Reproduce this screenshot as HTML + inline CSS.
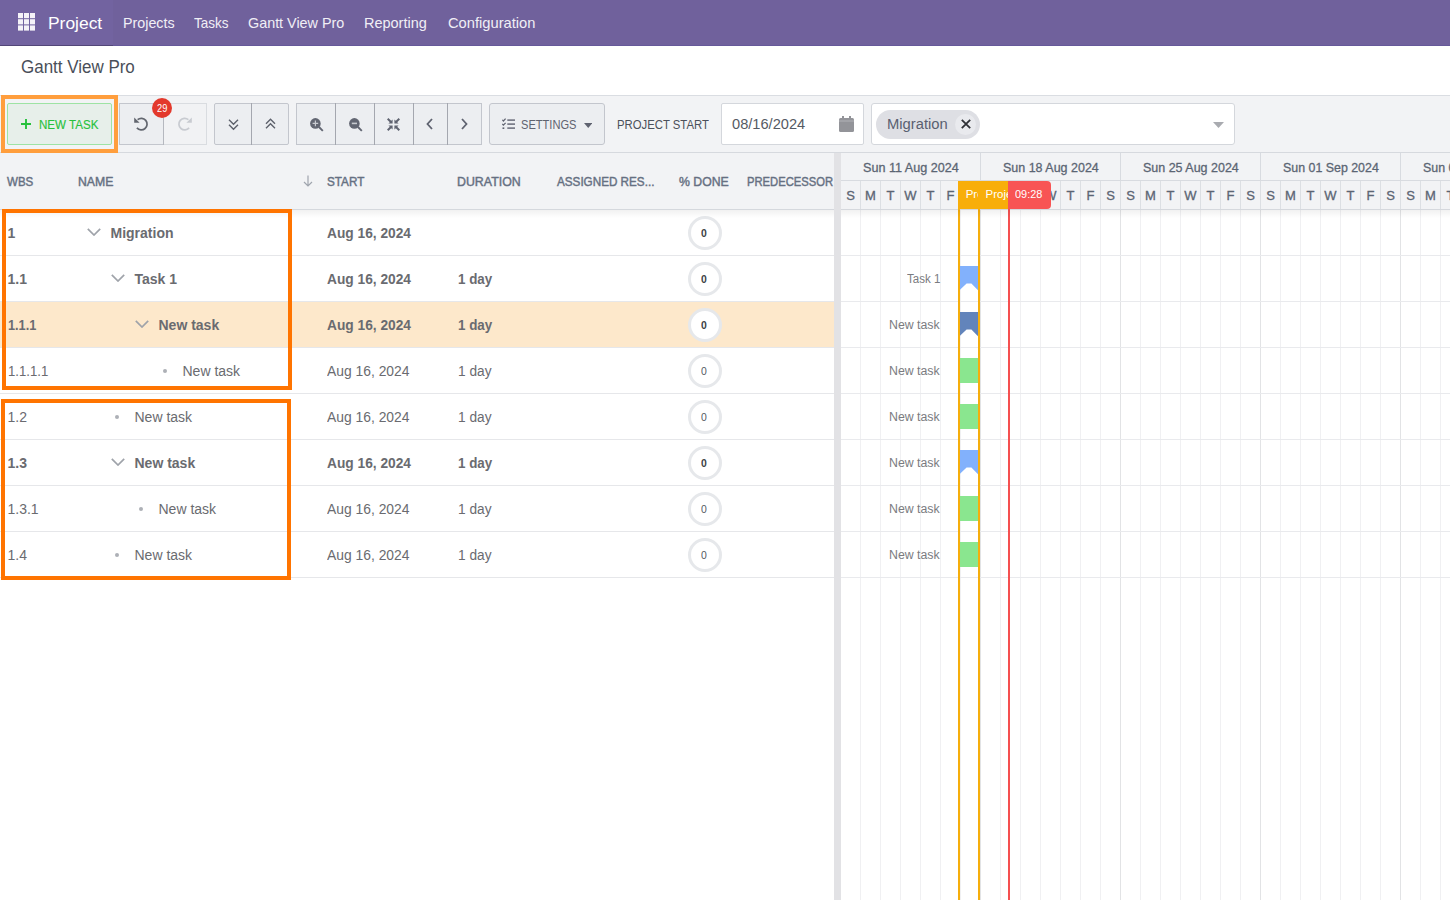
<!DOCTYPE html>
<html><head><meta charset="utf-8"><title>Gantt View Pro</title>
<style>
*{box-sizing:border-box;margin:0;padding:0}
html,body{width:1450px;height:900px;overflow:hidden;background:#fff;font-family:"Liberation Sans", sans-serif;}
.abs{position:absolute;white-space:nowrap}
.btn{position:absolute;top:103px;height:42px;background:#eceef1;border:1px solid #c3c6cd;}
.sep{position:absolute;top:103px;width:1px;height:42px;background:#a4a7af}
.row{position:absolute;left:0;width:835px;height:46px;border-bottom:1px solid #e6e7ea}
.pct{position:absolute;left:688px;width:34px;height:34px;border:3px solid #e6e8eb;border-radius:50%;background:#fff}
.wk{position:absolute;top:0;height:28px;border-right:1px solid #d8dbe0;border-bottom:1px solid #d8dbe0}
.dy{position:absolute;top:28px;height:28px;width:20px;border-right:1px solid #dcdfe3}
.gl{position:absolute;top:210px;width:1px;height:690px;background:#eeeff1}
.glr{position:absolute;left:841px;width:609px;height:1px;background:#e9eaed}
.obox{position:absolute;border:4px solid #ff7400}
</style></head><body>

<div class="abs" style="left:0;top:0;width:1450px;height:46px;background:#70619c;border-bottom:1px solid #66599a"></div>
<div class="abs" style="left:0;top:0;width:113px;height:45px;background:#7263a0"></div>
<div class="abs" style="left:0;top:45px;width:113px;height:1px;background:#524678"></div>
<svg class="abs" style="left:18px;top:13px" width="17" height="18" viewBox="0 0 17 18">
<rect x="0" y="0.0" width="5" height="5.2" fill="#f5f3f8"/>
<rect x="0" y="6.2" width="5" height="5.2" fill="#f5f3f8"/>
<rect x="0" y="12.4" width="5" height="5.2" fill="#f5f3f8"/>
<rect x="6" y="0.0" width="5" height="5.2" fill="#f5f3f8"/>
<rect x="6" y="6.2" width="5" height="5.2" fill="#f5f3f8"/>
<rect x="6" y="12.4" width="5" height="5.2" fill="#f5f3f8"/>
<rect x="12" y="0.0" width="5" height="5.2" fill="#f5f3f8"/>
<rect x="12" y="6.2" width="5" height="5.2" fill="#f5f3f8"/>
<rect x="12" y="12.4" width="5" height="5.2" fill="#f5f3f8"/>
</svg>
<div class="abs" style="left:47.8px;top:15px;font-size:17.4px;line-height:17.4px;font-weight:400;color:#ffffff;transform:scaleX(1.0014);transform-origin:0 0;">Project</div>
<div class="abs" style="left:122.7px;top:16px;font-size:14.5px;line-height:14.5px;font-weight:400;color:#f1eff6;transform:scaleX(0.9849);transform-origin:0 0;">Projects</div>
<div class="abs" style="left:193.9px;top:16px;font-size:14.5px;line-height:14.5px;font-weight:400;color:#f1eff6;transform:scaleX(0.9305);transform-origin:0 0;">Tasks</div>
<div class="abs" style="left:248px;top:16px;font-size:14.5px;line-height:14.5px;font-weight:400;color:#f1eff6;transform:scaleX(0.9901);transform-origin:0 0;">Gantt View Pro</div>
<div class="abs" style="left:364.3px;top:16px;font-size:14.5px;line-height:14.5px;font-weight:400;color:#f1eff6;transform:scaleX(0.9988);transform-origin:0 0;">Reporting</div>
<div class="abs" style="left:447.5px;top:16px;font-size:14.5px;line-height:14.5px;font-weight:400;color:#f1eff6;transform:scaleX(1.0133);transform-origin:0 0;">Configuration</div>
<div class="abs" style="left:20.7px;top:59px;font-size:17.5px;line-height:17.5px;font-weight:400;color:#4a4f59;transform:scaleX(0.9695);transform-origin:0 0;">Gantt View Pro</div>
<div class="abs" style="left:0;top:95px;width:1450px;height:58px;background:#f2f3f5;border-top:1px solid #dadde2;border-bottom:1px solid #d6d9de"></div>
<div class="abs" style="left:1px;top:95px;width:117px;height:58px;border:4px solid #ff9e3d"></div>
<div class="abs" style="left:7px;top:103px;width:105px;height:42px;background:#e7efea;border:1px solid #9ee3a4;border-radius:2px"></div>
<svg class="abs" style="left:21px;top:119px" width="10" height="10" viewBox="0 0 10 10"><path d="M5 0 V10 M0 5 H10" stroke="#27c13d" stroke-width="1.9"/></svg>
<div class="abs" style="left:38.5px;top:118px;font-size:13px;line-height:13px;font-weight:400;color:#27c13d;transform:scaleX(0.8920);transform-origin:0 0;-webkit-text-stroke:0.15px #27c13d;">NEW TASK</div>
<div class="btn" style="left:119px;width:45px"></div>
<div class="btn" style="left:163px;width:44px;background:#f1f2f4;border-color:#d9dce0"></div>
<div class="sep" style="left:163px;background:#b5b8bf"></div>
<svg class="abs" style="left:133px;top:116px" width="16" height="16" viewBox="0 0 16 16"><path d="M4.6 3.6 A5.8 5.8 0 1 1 3.9 11.9" fill="none" stroke="#62666f" stroke-width="1.7"/><path d="M1.2 1.4 L1.2 6.8 L6.6 6.8 Z" fill="#62666f"/></svg>
<svg class="abs" style="left:177px;top:116px" width="16" height="16" viewBox="0 0 16 16"><g transform="translate(16 0) scale(-1 1)"><path d="M4.6 3.6 A5.8 5.8 0 1 1 3.9 11.9" fill="none" stroke="#c8cbd1" stroke-width="1.7"/><path d="M1.2 1.4 L1.2 6.8 L6.6 6.8 Z" fill="#c8cbd1"/></g></svg>
<div class="abs" style="left:152px;top:98px;width:20px;height:20px;border-radius:50%;background:#e3392c"></div>
<div class="abs" style="left:156.7px;top:104px;font-size:10.2px;line-height:10.2px;font-weight:400;color:#ffffff;transform:scaleX(0.9080);transform-origin:0 0;">29</div>
<div class="btn" style="left:214px;width:38px;border-radius:2px 0 0 2px"></div>
<div class="btn" style="left:251px;width:38px;border-radius:0 2px 2px 0"></div>
<div class="sep" style="left:251px"></div>
<svg class="abs" style="left:228px;top:118px" width="11" height="14" viewBox="0 0 11 14"><path d="M1 1.8 L5.5 6.3 L10 1.8 M1 6.8 L5.5 11.3 L10 6.8" fill="none" stroke="#5c606b" stroke-width="1.35"/></svg>
<svg class="abs" style="left:264.5px;top:117px" width="11" height="14" viewBox="0 0 11 14"><path d="M1 6.8 L5.5 2.3 L10 6.8 M1 11.3 L5.5 6.8 L10 11.3" fill="none" stroke="#5c606b" stroke-width="1.35"/></svg>
<div class="btn" style="left:296px;width:40px"></div>
<div class="btn" style="left:335px;width:40px"></div>
<div class="btn" style="left:374px;width:40px"></div>
<div class="btn" style="left:413px;width:35px"></div>
<div class="btn" style="left:447px;width:35px"></div>
<div class="sep" style="left:335px"></div>
<div class="sep" style="left:374px"></div>
<div class="sep" style="left:413px"></div>
<div class="sep" style="left:447px"></div>
<svg class="abs" style="left:309.5px;top:117.5px" width="14" height="14" viewBox="0 0 14 14"><circle cx="5.4" cy="5.4" r="5.3" fill="#626672"/><path d="M9 9 L12.8 12.8" stroke="#626672" stroke-width="1.9"/><path d="M5.4 2.6 V8.2 M2.6 5.4 H8.2" stroke="#c8cad0" stroke-width="1.2"/></svg>
<svg class="abs" style="left:348.5px;top:117.5px" width="14" height="14" viewBox="0 0 14 14"><circle cx="5.4" cy="5.4" r="5.3" fill="#626672"/><path d="M9 9 L12.8 12.8" stroke="#626672" stroke-width="1.9"/><path d="M2.8 5.4 H8" stroke="#c8cad0" stroke-width="1.6"/></svg>
<svg class="abs" style="left:387px;top:118px" width="13" height="13" viewBox="0 0 13 13"><g fill="#5f6370"><path d="M5.6 5.6 V1.4 L4.2 2.8 L1.4 0 L0 1.4 L2.8 4.2 L1.4 5.6 Z"/><path transform="translate(13 0) scale(-1 1)" d="M5.6 5.6 V1.4 L4.2 2.8 L1.4 0 L0 1.4 L2.8 4.2 L1.4 5.6 Z"/><path transform="translate(0 13) scale(1 -1)" d="M5.6 5.6 V1.4 L4.2 2.8 L1.4 0 L0 1.4 L2.8 4.2 L1.4 5.6 Z"/><path transform="translate(13 13) scale(-1 -1)" d="M5.6 5.6 V1.4 L4.2 2.8 L1.4 0 L0 1.4 L2.8 4.2 L1.4 5.6 Z"/></g></svg>
<svg class="abs" style="left:425px;top:117px" width="10" height="14" viewBox="0 0 10 14"><path d="M7 2 L2.5 7 L7 12" fill="none" stroke="#5f6370" stroke-width="1.8"/></svg>
<svg class="abs" style="left:459px;top:117px" width="10" height="14" viewBox="0 0 10 14"><path d="M3 2 L7.5 7 L3 12" fill="none" stroke="#5f6370" stroke-width="1.8"/></svg>
<div class="btn" style="left:489px;width:116px;border-radius:3px"></div>
<svg class="abs" style="left:502px;top:118px" width="14" height="12" viewBox="0 0 14 12"><g fill="#5f6370"><rect x="5.3" y="1.4" width="7.7" height="1.4"/><rect x="5.3" y="5.4" width="7.7" height="1.4"/><rect x="5.3" y="9.4" width="7.7" height="1.4"/><path d="M0.3 1.8 L1.4 3 L3.6 0.6" fill="none" stroke="#5f6370" stroke-width="1.2"/><path d="M0.3 6 L1.4 7.2 L3.6 4.8" fill="none" stroke="#5f6370" stroke-width="1.2"/><rect x="0.5" y="9.4" width="1.8" height="1.6"/></g></svg>
<div class="abs" style="left:521.4px;top:118px;font-size:13.2px;line-height:13.2px;font-weight:400;color:#5f6370;transform:scaleX(0.8415);transform-origin:0 0;">SETTINGS</div>
<svg class="abs" style="left:583.5px;top:123px" width="8.5" height="5" viewBox="0 0 8.5 5"><path d="M0 0 H8.5 L4.25 5 Z" fill="#5f6370"/></svg>
<div class="abs" style="left:616.6px;top:118px;font-size:13.2px;line-height:13.2px;font-weight:400;color:#4b505a;transform:scaleX(0.8590);transform-origin:0 0;">PROJECT START</div>
<div class="abs" style="left:721px;top:103px;width:143px;height:42px;background:#fff;border:1px solid #d4d7dc;border-radius:2px"></div>
<div class="abs" style="left:732.4px;top:116px;font-size:15px;line-height:15px;font-weight:400;color:#555a63;transform:scaleX(0.9750);transform-origin:0 0;">08/16/2024</div>
<svg class="abs" style="left:839px;top:116px" width="15" height="16" viewBox="0 0 15 16"><g fill="#939499"><rect x="0" y="2" width="15" height="14" rx="1.5"/><rect x="3" y="0" width="2" height="4"/><rect x="10" y="0" width="2" height="4"/></g><rect x="0" y="4.6" width="15" height="0.8" fill="#b9babe"/></svg>
<div class="abs" style="left:871px;top:103px;width:364px;height:42px;background:#fff;border:1px solid #d4d7dc;border-radius:3px"></div>
<div class="abs" style="left:876px;top:110px;width:104px;height:29px;background:#dedfe4;border-radius:15px"></div>
<div class="abs" style="left:886.8px;top:117px;font-size:14px;line-height:14px;font-weight:400;color:#596070;transform:scaleX(1.0539);transform-origin:0 0;">Migration</div>
<div class="abs" style="left:955px;top:114px;width:21px;height:21px;border-radius:50%;background:#e9eaee"></div>
<svg class="abs" style="left:960.5px;top:118.5px" width="10" height="10" viewBox="0 0 10 10"><path d="M0.8 0.8 L9.2 9.2 M9.2 0.8 L0.8 9.2" stroke="#2f3136" stroke-width="1.8"/></svg>
<svg class="abs" style="left:1213px;top:122px" width="11" height="6" viewBox="0 0 11 6"><path d="M0 0 H11 L5.5 6 Z" fill="#a9abb0"/></svg>
<div class="abs" style="left:0;top:153px;width:835px;height:57px;background:#f2f3f5;border-bottom:1px solid #d5d8dd"></div>
<div class="abs" style="left:7.3px;top:175px;font-size:13px;line-height:13px;font-weight:400;color:#667082;transform:scaleX(0.8878);transform-origin:0 0;-webkit-text-stroke:0.45px #667082;">WBS</div>
<div class="abs" style="left:77.6px;top:175px;font-size:13px;line-height:13px;font-weight:400;color:#667082;transform:scaleX(0.9424);transform-origin:0 0;-webkit-text-stroke:0.45px #667082;">NAME</div>
<div class="abs" style="left:327.2px;top:175px;font-size:13px;line-height:13px;font-weight:400;color:#667082;transform:scaleX(0.9005);transform-origin:0 0;-webkit-text-stroke:0.45px #667082;">START</div>
<div class="abs" style="left:457.1px;top:175px;font-size:13px;line-height:13px;font-weight:400;color:#667082;transform:scaleX(0.9516);transform-origin:0 0;-webkit-text-stroke:0.45px #667082;">DURATION</div>
<div class="abs" style="left:557.2px;top:175px;font-size:13px;line-height:13px;font-weight:400;color:#667082;transform:scaleX(0.8987);transform-origin:0 0;-webkit-text-stroke:0.45px #667082;">ASSIGNED RES...</div>
<div class="abs" style="left:679.4px;top:175px;font-size:13px;line-height:13px;font-weight:400;color:#667082;transform:scaleX(0.9425);transform-origin:0 0;-webkit-text-stroke:0.45px #667082;">% DONE</div>
<div class="abs" style="left:747px;top:175px;font-size:13px;line-height:13px;font-weight:400;color:#667082;transform:scaleX(0.8636);transform-origin:0 0;-webkit-text-stroke:0.45px #667082;">PREDECESSOR</div>
<svg class="abs" style="left:303px;top:175px" width="10" height="12" viewBox="0 0 10 12"><path d="M5 0.5 V11 M1 7 L5 11 L9 7" fill="none" stroke="#a0a5ae" stroke-width="1.2"/></svg>
<div class="row" style="top:210px;background:#fff"></div>
<div class="abs" style="left:7.5px;top:226px;font-size:14px;line-height:14px;font-weight:700;color:#6a6b70;">1</div>
<svg class="abs" style="left:86.5px;top:228px" width="14" height="8" viewBox="0 0 14 8"><path d="M0.8 0.8 L7 7 L13.2 0.8" fill="none" stroke="#9fa3aa" stroke-width="1.7"/></svg>
<div class="abs" style="left:110.5px;top:226px;font-size:14px;line-height:14px;font-weight:700;color:#6a6b70;">Migration</div>
<div class="abs" style="left:327.2px;top:226px;font-size:14px;line-height:14px;font-weight:700;color:#6a6b70;transform:scaleX(0.9812);transform-origin:0 0;">Aug 16, 2024</div>
<div class="pct" style="top:216px"></div>
<div class="abs" style="left:701.4px;top:228px;font-size:11px;line-height:11px;font-weight:700;color:#3c3f46;transform:scaleX(0.9469);transform-origin:0 0;">0</div>
<div class="row" style="top:256px;background:#fff"></div>
<div class="abs" style="left:7.5px;top:272px;font-size:14px;line-height:14px;font-weight:700;color:#6a6b70;">1.1</div>
<svg class="abs" style="left:110.5px;top:274px" width="14" height="8" viewBox="0 0 14 8"><path d="M0.8 0.8 L7 7 L13.2 0.8" fill="none" stroke="#9fa3aa" stroke-width="1.7"/></svg>
<div class="abs" style="left:134.5px;top:272px;font-size:14px;line-height:14px;font-weight:700;color:#6a6b70;">Task 1</div>
<div class="abs" style="left:327.2px;top:272px;font-size:14px;line-height:14px;font-weight:700;color:#6a6b70;transform:scaleX(0.9812);transform-origin:0 0;">Aug 16, 2024</div>
<div class="abs" style="left:457.6px;top:272px;font-size:14px;line-height:14px;font-weight:700;color:#6a6b70;transform:scaleX(0.9550);transform-origin:0 0;">1 day</div>
<div class="pct" style="top:262px"></div>
<div class="abs" style="left:701.4px;top:274px;font-size:11px;line-height:11px;font-weight:700;color:#3c3f46;transform:scaleX(0.9469);transform-origin:0 0;">0</div>
<div class="row" style="top:302px;background:#fde8cb"></div>
<div class="abs" style="left:7.5px;top:318px;font-size:14px;line-height:14px;font-weight:700;color:#6a6b70;transform:scaleX(0.9088);transform-origin:0 0;">1.1.1</div>
<svg class="abs" style="left:134.5px;top:320px" width="14" height="8" viewBox="0 0 14 8"><path d="M0.8 0.8 L7 7 L13.2 0.8" fill="none" stroke="#9fa3aa" stroke-width="1.7"/></svg>
<div class="abs" style="left:158.5px;top:318px;font-size:14px;line-height:14px;font-weight:700;color:#6a6b70;">New task</div>
<div class="abs" style="left:327.2px;top:318px;font-size:14px;line-height:14px;font-weight:700;color:#6a6b70;transform:scaleX(0.9812);transform-origin:0 0;">Aug 16, 2024</div>
<div class="abs" style="left:457.6px;top:318px;font-size:14px;line-height:14px;font-weight:700;color:#6a6b70;transform:scaleX(0.9550);transform-origin:0 0;">1 day</div>
<div class="pct" style="top:308px"></div>
<div class="abs" style="left:701.4px;top:320px;font-size:11px;line-height:11px;font-weight:700;color:#3c3f46;transform:scaleX(0.9469);transform-origin:0 0;">0</div>
<div class="row" style="top:348px;background:#fff"></div>
<div class="abs" style="left:7.5px;top:364px;font-size:14px;line-height:14px;font-weight:400;color:#6a6b70;transform:scaleX(0.9386);transform-origin:0 0;">1.1.1.1</div>
<div class="abs" style="left:162.5px;top:369px;width:4px;height:4px;border-radius:50%;background:#adb0b6"></div>
<div class="abs" style="left:182.5px;top:364px;font-size:14px;line-height:14px;font-weight:400;color:#6a6b70;">New task</div>
<div class="abs" style="left:327.2px;top:364px;font-size:14px;line-height:14px;font-weight:400;color:#6a6b70;transform:scaleX(0.9904);transform-origin:0 0;">Aug 16, 2024</div>
<div class="abs" style="left:457.6px;top:364px;font-size:14px;line-height:14px;font-weight:400;color:#6a6b70;transform:scaleX(0.9781);transform-origin:0 0;">1 day</div>
<div class="pct" style="top:354px"></div>
<div class="abs" style="left:701.4px;top:366px;font-size:11px;line-height:11px;font-weight:400;color:#55585f;transform:scaleX(0.9469);transform-origin:0 0;">0</div>
<div class="row" style="top:394px;background:#fff"></div>
<div class="abs" style="left:7.5px;top:410px;font-size:14px;line-height:14px;font-weight:400;color:#6a6b70;">1.2</div>
<div class="abs" style="left:114.5px;top:415px;width:4px;height:4px;border-radius:50%;background:#adb0b6"></div>
<div class="abs" style="left:134.5px;top:410px;font-size:14px;line-height:14px;font-weight:400;color:#6a6b70;">New task</div>
<div class="abs" style="left:327.2px;top:410px;font-size:14px;line-height:14px;font-weight:400;color:#6a6b70;transform:scaleX(0.9904);transform-origin:0 0;">Aug 16, 2024</div>
<div class="abs" style="left:457.6px;top:410px;font-size:14px;line-height:14px;font-weight:400;color:#6a6b70;transform:scaleX(0.9781);transform-origin:0 0;">1 day</div>
<div class="pct" style="top:400px"></div>
<div class="abs" style="left:701.4px;top:412px;font-size:11px;line-height:11px;font-weight:400;color:#55585f;transform:scaleX(0.9469);transform-origin:0 0;">0</div>
<div class="row" style="top:440px;background:#fff"></div>
<div class="abs" style="left:7.5px;top:456px;font-size:14px;line-height:14px;font-weight:700;color:#6a6b70;">1.3</div>
<svg class="abs" style="left:110.5px;top:458px" width="14" height="8" viewBox="0 0 14 8"><path d="M0.8 0.8 L7 7 L13.2 0.8" fill="none" stroke="#9fa3aa" stroke-width="1.7"/></svg>
<div class="abs" style="left:134.5px;top:456px;font-size:14px;line-height:14px;font-weight:700;color:#6a6b70;">New task</div>
<div class="abs" style="left:327.2px;top:456px;font-size:14px;line-height:14px;font-weight:700;color:#6a6b70;transform:scaleX(0.9812);transform-origin:0 0;">Aug 16, 2024</div>
<div class="abs" style="left:457.6px;top:456px;font-size:14px;line-height:14px;font-weight:700;color:#6a6b70;transform:scaleX(0.9550);transform-origin:0 0;">1 day</div>
<div class="pct" style="top:446px"></div>
<div class="abs" style="left:701.4px;top:458px;font-size:11px;line-height:11px;font-weight:700;color:#3c3f46;transform:scaleX(0.9469);transform-origin:0 0;">0</div>
<div class="row" style="top:486px;background:#fff"></div>
<div class="abs" style="left:7.5px;top:502px;font-size:14px;line-height:14px;font-weight:400;color:#6a6b70;">1.3.1</div>
<div class="abs" style="left:138.5px;top:507px;width:4px;height:4px;border-radius:50%;background:#adb0b6"></div>
<div class="abs" style="left:158.5px;top:502px;font-size:14px;line-height:14px;font-weight:400;color:#6a6b70;">New task</div>
<div class="abs" style="left:327.2px;top:502px;font-size:14px;line-height:14px;font-weight:400;color:#6a6b70;transform:scaleX(0.9904);transform-origin:0 0;">Aug 16, 2024</div>
<div class="abs" style="left:457.6px;top:502px;font-size:14px;line-height:14px;font-weight:400;color:#6a6b70;transform:scaleX(0.9781);transform-origin:0 0;">1 day</div>
<div class="pct" style="top:492px"></div>
<div class="abs" style="left:701.4px;top:504px;font-size:11px;line-height:11px;font-weight:400;color:#55585f;transform:scaleX(0.9469);transform-origin:0 0;">0</div>
<div class="row" style="top:532px;background:#fff"></div>
<div class="abs" style="left:7.5px;top:548px;font-size:14px;line-height:14px;font-weight:400;color:#6a6b70;">1.4</div>
<div class="abs" style="left:114.5px;top:553px;width:4px;height:4px;border-radius:50%;background:#adb0b6"></div>
<div class="abs" style="left:134.5px;top:548px;font-size:14px;line-height:14px;font-weight:400;color:#6a6b70;">New task</div>
<div class="abs" style="left:327.2px;top:548px;font-size:14px;line-height:14px;font-weight:400;color:#6a6b70;transform:scaleX(0.9904);transform-origin:0 0;">Aug 16, 2024</div>
<div class="abs" style="left:457.6px;top:548px;font-size:14px;line-height:14px;font-weight:400;color:#6a6b70;transform:scaleX(0.9781);transform-origin:0 0;">1 day</div>
<div class="pct" style="top:538px"></div>
<div class="abs" style="left:701.4px;top:550px;font-size:11px;line-height:11px;font-weight:400;color:#55585f;transform:scaleX(0.9469);transform-origin:0 0;">0</div>
<div class="abs" style="left:841px;top:153px;width:609px;height:57px;background:#f2f3f5;border-bottom:1px solid #d5d8dd;overflow:hidden">
<div class="wk" style="left:0px;width:140px"></div>
<div class="wk" style="left:140px;width:140px"></div>
<div class="wk" style="left:280px;width:140px"></div>
<div class="wk" style="left:420px;width:140px"></div>
<div class="wk" style="left:560px;width:140px"></div>
<div class="dy" style="left:0px"></div>
<div class="dy" style="left:20px"></div>
<div class="dy" style="left:40px"></div>
<div class="dy" style="left:60px"></div>
<div class="dy" style="left:80px"></div>
<div class="dy" style="left:100px"></div>
<div class="dy" style="left:120px"></div>
<div class="dy" style="left:140px"></div>
<div class="dy" style="left:160px"></div>
<div class="dy" style="left:180px"></div>
<div class="dy" style="left:200px"></div>
<div class="dy" style="left:220px"></div>
<div class="dy" style="left:240px"></div>
<div class="dy" style="left:260px"></div>
<div class="dy" style="left:280px"></div>
<div class="dy" style="left:300px"></div>
<div class="dy" style="left:320px"></div>
<div class="dy" style="left:340px"></div>
<div class="dy" style="left:360px"></div>
<div class="dy" style="left:380px"></div>
<div class="dy" style="left:400px"></div>
<div class="dy" style="left:420px"></div>
<div class="dy" style="left:440px"></div>
<div class="dy" style="left:460px"></div>
<div class="dy" style="left:480px"></div>
<div class="dy" style="left:500px"></div>
<div class="dy" style="left:520px"></div>
<div class="dy" style="left:540px"></div>
<div class="dy" style="left:560px"></div>
<div class="dy" style="left:580px"></div>
<div class="dy" style="left:600px"></div>
</div>
<div class="abs" style="left:850.5px;top:153px;width:120px;height:28px;overflow:visible">
</div>
<div class="abs" style="left:990.5px;top:153px;width:120px;height:28px;overflow:visible">
</div>
<div class="abs" style="left:1130.5px;top:153px;width:120px;height:28px;overflow:visible">
</div>
<div class="abs" style="left:1270.5px;top:153px;width:120px;height:28px;overflow:visible">
</div>
<div class="abs" style="left:1410.5px;top:153px;width:120px;height:28px;overflow:visible">
</div>
<div class="abs" style="left:862.6px;top:161px;font-size:13px;line-height:13px;font-weight:400;color:#5b6573;transform:scaleX(0.9697);transform-origin:0 0;-webkit-text-stroke:0.3px #5b6573;">Sun 11 Aug 2024</div>
<div class="abs" style="left:1002.6px;top:161px;font-size:13px;line-height:13px;font-weight:400;color:#5b6573;transform:scaleX(0.9603);transform-origin:0 0;-webkit-text-stroke:0.3px #5b6573;">Sun 18 Aug 2024</div>
<div class="abs" style="left:1142.6px;top:161px;font-size:13px;line-height:13px;font-weight:400;color:#5b6573;transform:scaleX(0.9603);transform-origin:0 0;-webkit-text-stroke:0.3px #5b6573;">Sun 25 Aug 2024</div>
<div class="abs" style="left:1282.6px;top:161px;font-size:13px;line-height:13px;font-weight:400;color:#5b6573;transform:scaleX(0.9534);transform-origin:0 0;-webkit-text-stroke:0.3px #5b6573;">Sun 01 Sep 2024</div>
<div class="abs" style="left:1422.6px;top:161px;font-size:13px;line-height:13px;font-weight:400;color:#5b6573;transform:scaleX(0.9534);transform-origin:0 0;-webkit-text-stroke:0.3px #5b6573;">Sun 08 Sep 2024</div>
<div class="abs" style="left:841px;top:181px;width:19px;height:28px;overflow:hidden"><div class="abs" style="left:0px;top:8px;font-size:13px;line-height:13px;font-weight:400;color:#5b6573;-webkit-text-stroke:0.3px #5b6573;width:19px;text-align:center">S</div></div>
<div class="abs" style="left:861px;top:181px;width:19px;height:28px;overflow:hidden"><div class="abs" style="left:0px;top:8px;font-size:13px;line-height:13px;font-weight:400;color:#5b6573;-webkit-text-stroke:0.3px #5b6573;width:19px;text-align:center">M</div></div>
<div class="abs" style="left:881px;top:181px;width:19px;height:28px;overflow:hidden"><div class="abs" style="left:0px;top:8px;font-size:13px;line-height:13px;font-weight:400;color:#5b6573;-webkit-text-stroke:0.3px #5b6573;width:19px;text-align:center">T</div></div>
<div class="abs" style="left:901px;top:181px;width:19px;height:28px;overflow:hidden"><div class="abs" style="left:0px;top:8px;font-size:13px;line-height:13px;font-weight:400;color:#5b6573;-webkit-text-stroke:0.3px #5b6573;width:19px;text-align:center">W</div></div>
<div class="abs" style="left:921px;top:181px;width:19px;height:28px;overflow:hidden"><div class="abs" style="left:0px;top:8px;font-size:13px;line-height:13px;font-weight:400;color:#5b6573;-webkit-text-stroke:0.3px #5b6573;width:19px;text-align:center">T</div></div>
<div class="abs" style="left:941px;top:181px;width:19px;height:28px;overflow:hidden"><div class="abs" style="left:0px;top:8px;font-size:13px;line-height:13px;font-weight:400;color:#5b6573;-webkit-text-stroke:0.3px #5b6573;width:19px;text-align:center">F</div></div>
<div class="abs" style="left:961px;top:181px;width:19px;height:28px;overflow:hidden"><div class="abs" style="left:0px;top:8px;font-size:13px;line-height:13px;font-weight:400;color:#5b6573;-webkit-text-stroke:0.3px #5b6573;width:19px;text-align:center">S</div></div>
<div class="abs" style="left:981px;top:181px;width:19px;height:28px;overflow:hidden"><div class="abs" style="left:0px;top:8px;font-size:13px;line-height:13px;font-weight:400;color:#5b6573;-webkit-text-stroke:0.3px #5b6573;width:19px;text-align:center">S</div></div>
<div class="abs" style="left:1001px;top:181px;width:19px;height:28px;overflow:hidden"><div class="abs" style="left:0px;top:8px;font-size:13px;line-height:13px;font-weight:400;color:#5b6573;-webkit-text-stroke:0.3px #5b6573;width:19px;text-align:center">M</div></div>
<div class="abs" style="left:1021px;top:181px;width:19px;height:28px;overflow:hidden"><div class="abs" style="left:0px;top:8px;font-size:13px;line-height:13px;font-weight:400;color:#5b6573;-webkit-text-stroke:0.3px #5b6573;width:19px;text-align:center">T</div></div>
<div class="abs" style="left:1041px;top:181px;width:19px;height:28px;overflow:hidden"><div class="abs" style="left:0px;top:8px;font-size:13px;line-height:13px;font-weight:400;color:#5b6573;-webkit-text-stroke:0.3px #5b6573;width:19px;text-align:center">W</div></div>
<div class="abs" style="left:1061px;top:181px;width:19px;height:28px;overflow:hidden"><div class="abs" style="left:0px;top:8px;font-size:13px;line-height:13px;font-weight:400;color:#5b6573;-webkit-text-stroke:0.3px #5b6573;width:19px;text-align:center">T</div></div>
<div class="abs" style="left:1081px;top:181px;width:19px;height:28px;overflow:hidden"><div class="abs" style="left:0px;top:8px;font-size:13px;line-height:13px;font-weight:400;color:#5b6573;-webkit-text-stroke:0.3px #5b6573;width:19px;text-align:center">F</div></div>
<div class="abs" style="left:1101px;top:181px;width:19px;height:28px;overflow:hidden"><div class="abs" style="left:0px;top:8px;font-size:13px;line-height:13px;font-weight:400;color:#5b6573;-webkit-text-stroke:0.3px #5b6573;width:19px;text-align:center">S</div></div>
<div class="abs" style="left:1121px;top:181px;width:19px;height:28px;overflow:hidden"><div class="abs" style="left:0px;top:8px;font-size:13px;line-height:13px;font-weight:400;color:#5b6573;-webkit-text-stroke:0.3px #5b6573;width:19px;text-align:center">S</div></div>
<div class="abs" style="left:1141px;top:181px;width:19px;height:28px;overflow:hidden"><div class="abs" style="left:0px;top:8px;font-size:13px;line-height:13px;font-weight:400;color:#5b6573;-webkit-text-stroke:0.3px #5b6573;width:19px;text-align:center">M</div></div>
<div class="abs" style="left:1161px;top:181px;width:19px;height:28px;overflow:hidden"><div class="abs" style="left:0px;top:8px;font-size:13px;line-height:13px;font-weight:400;color:#5b6573;-webkit-text-stroke:0.3px #5b6573;width:19px;text-align:center">T</div></div>
<div class="abs" style="left:1181px;top:181px;width:19px;height:28px;overflow:hidden"><div class="abs" style="left:0px;top:8px;font-size:13px;line-height:13px;font-weight:400;color:#5b6573;-webkit-text-stroke:0.3px #5b6573;width:19px;text-align:center">W</div></div>
<div class="abs" style="left:1201px;top:181px;width:19px;height:28px;overflow:hidden"><div class="abs" style="left:0px;top:8px;font-size:13px;line-height:13px;font-weight:400;color:#5b6573;-webkit-text-stroke:0.3px #5b6573;width:19px;text-align:center">T</div></div>
<div class="abs" style="left:1221px;top:181px;width:19px;height:28px;overflow:hidden"><div class="abs" style="left:0px;top:8px;font-size:13px;line-height:13px;font-weight:400;color:#5b6573;-webkit-text-stroke:0.3px #5b6573;width:19px;text-align:center">F</div></div>
<div class="abs" style="left:1241px;top:181px;width:19px;height:28px;overflow:hidden"><div class="abs" style="left:0px;top:8px;font-size:13px;line-height:13px;font-weight:400;color:#5b6573;-webkit-text-stroke:0.3px #5b6573;width:19px;text-align:center">S</div></div>
<div class="abs" style="left:1261px;top:181px;width:19px;height:28px;overflow:hidden"><div class="abs" style="left:0px;top:8px;font-size:13px;line-height:13px;font-weight:400;color:#5b6573;-webkit-text-stroke:0.3px #5b6573;width:19px;text-align:center">S</div></div>
<div class="abs" style="left:1281px;top:181px;width:19px;height:28px;overflow:hidden"><div class="abs" style="left:0px;top:8px;font-size:13px;line-height:13px;font-weight:400;color:#5b6573;-webkit-text-stroke:0.3px #5b6573;width:19px;text-align:center">M</div></div>
<div class="abs" style="left:1301px;top:181px;width:19px;height:28px;overflow:hidden"><div class="abs" style="left:0px;top:8px;font-size:13px;line-height:13px;font-weight:400;color:#5b6573;-webkit-text-stroke:0.3px #5b6573;width:19px;text-align:center">T</div></div>
<div class="abs" style="left:1321px;top:181px;width:19px;height:28px;overflow:hidden"><div class="abs" style="left:0px;top:8px;font-size:13px;line-height:13px;font-weight:400;color:#5b6573;-webkit-text-stroke:0.3px #5b6573;width:19px;text-align:center">W</div></div>
<div class="abs" style="left:1341px;top:181px;width:19px;height:28px;overflow:hidden"><div class="abs" style="left:0px;top:8px;font-size:13px;line-height:13px;font-weight:400;color:#5b6573;-webkit-text-stroke:0.3px #5b6573;width:19px;text-align:center">T</div></div>
<div class="abs" style="left:1361px;top:181px;width:19px;height:28px;overflow:hidden"><div class="abs" style="left:0px;top:8px;font-size:13px;line-height:13px;font-weight:400;color:#5b6573;-webkit-text-stroke:0.3px #5b6573;width:19px;text-align:center">F</div></div>
<div class="abs" style="left:1381px;top:181px;width:19px;height:28px;overflow:hidden"><div class="abs" style="left:0px;top:8px;font-size:13px;line-height:13px;font-weight:400;color:#5b6573;-webkit-text-stroke:0.3px #5b6573;width:19px;text-align:center">S</div></div>
<div class="abs" style="left:1401px;top:181px;width:19px;height:28px;overflow:hidden"><div class="abs" style="left:0px;top:8px;font-size:13px;line-height:13px;font-weight:400;color:#5b6573;-webkit-text-stroke:0.3px #5b6573;width:19px;text-align:center">S</div></div>
<div class="abs" style="left:1421px;top:181px;width:19px;height:28px;overflow:hidden"><div class="abs" style="left:0px;top:8px;font-size:13px;line-height:13px;font-weight:400;color:#5b6573;-webkit-text-stroke:0.3px #5b6573;width:19px;text-align:center">M</div></div>
<div class="abs" style="left:1441px;top:181px;width:19px;height:28px;overflow:hidden"><div class="abs" style="left:0px;top:8px;font-size:13px;line-height:13px;font-weight:400;color:#5b6573;-webkit-text-stroke:0.3px #5b6573;width:19px;text-align:center">T</div></div>
<div class="gl" style="left:860px;background:#f0f0f2"></div>
<div class="gl" style="left:880px;background:#f0f0f2"></div>
<div class="gl" style="left:900px;background:#f0f0f2"></div>
<div class="gl" style="left:920px;background:#f0f0f2"></div>
<div class="gl" style="left:940px;background:#f0f0f2"></div>
<div class="gl" style="left:960px;background:#f0f0f2"></div>
<div class="gl" style="left:980px;background:#e2e3e5"></div>
<div class="gl" style="left:1000px;background:#f0f0f2"></div>
<div class="gl" style="left:1020px;background:#f0f0f2"></div>
<div class="gl" style="left:1040px;background:#f0f0f2"></div>
<div class="gl" style="left:1060px;background:#f0f0f2"></div>
<div class="gl" style="left:1080px;background:#f0f0f2"></div>
<div class="gl" style="left:1100px;background:#f0f0f2"></div>
<div class="gl" style="left:1120px;background:#e2e3e5"></div>
<div class="gl" style="left:1140px;background:#f0f0f2"></div>
<div class="gl" style="left:1160px;background:#f0f0f2"></div>
<div class="gl" style="left:1180px;background:#f0f0f2"></div>
<div class="gl" style="left:1200px;background:#f0f0f2"></div>
<div class="gl" style="left:1220px;background:#f0f0f2"></div>
<div class="gl" style="left:1240px;background:#f0f0f2"></div>
<div class="gl" style="left:1260px;background:#e2e3e5"></div>
<div class="gl" style="left:1280px;background:#f0f0f2"></div>
<div class="gl" style="left:1300px;background:#f0f0f2"></div>
<div class="gl" style="left:1320px;background:#f0f0f2"></div>
<div class="gl" style="left:1340px;background:#f0f0f2"></div>
<div class="gl" style="left:1360px;background:#f0f0f2"></div>
<div class="gl" style="left:1380px;background:#f0f0f2"></div>
<div class="gl" style="left:1400px;background:#e2e3e5"></div>
<div class="gl" style="left:1420px;background:#f0f0f2"></div>
<div class="gl" style="left:1440px;background:#f0f0f2"></div>
<div class="glr" style="top:255px"></div>
<div class="glr" style="top:301px"></div>
<div class="glr" style="top:347px"></div>
<div class="glr" style="top:393px"></div>
<div class="glr" style="top:439px"></div>
<div class="glr" style="top:485px"></div>
<div class="glr" style="top:531px"></div>
<div class="glr" style="top:577px"></div>
<div class="abs" style="left:906.7px;top:273px;font-size:12.5px;line-height:12.5px;font-weight:400;color:#7a7b80;transform:scaleX(0.9214);transform-origin:0 0;">Task 1</div>
<svg class="abs" style="left:960px;top:266px" width="18" height="25" viewBox="0 0 18 25"><path d="M0 0 H18 V24.3 L11.4 17.6 H6.6 L0 23.8 Z" fill="#82b1fc"/></svg>
<div class="abs" style="left:889.3px;top:319px;font-size:12.5px;line-height:12.5px;font-weight:400;color:#7a7b80;transform:scaleX(0.9863);transform-origin:0 0;">New task</div>
<svg class="abs" style="left:960px;top:312px" width="18" height="25" viewBox="0 0 18 25"><path d="M0 0 H18 V24.3 L11.4 17.6 H6.6 L0 23.8 Z" fill="#6284bb"/></svg>
<div class="abs" style="left:889.3px;top:365px;font-size:12.5px;line-height:12.5px;font-weight:400;color:#7a7b80;transform:scaleX(0.9863);transform-origin:0 0;">New task</div>
<div class="abs" style="left:960px;top:358px;width:18px;height:25px;background:#8ae68f"></div>
<div class="abs" style="left:889.3px;top:411px;font-size:12.5px;line-height:12.5px;font-weight:400;color:#7a7b80;transform:scaleX(0.9863);transform-origin:0 0;">New task</div>
<div class="abs" style="left:960px;top:404px;width:18px;height:25px;background:#8ae68f"></div>
<div class="abs" style="left:889.3px;top:457px;font-size:12.5px;line-height:12.5px;font-weight:400;color:#7a7b80;transform:scaleX(0.9863);transform-origin:0 0;">New task</div>
<svg class="abs" style="left:960px;top:450px" width="18" height="25" viewBox="0 0 18 25"><path d="M0 0 H18 V24.3 L11.4 17.6 H6.6 L0 23.8 Z" fill="#82b1fc"/></svg>
<div class="abs" style="left:889.3px;top:503px;font-size:12.5px;line-height:12.5px;font-weight:400;color:#7a7b80;transform:scaleX(0.9863);transform-origin:0 0;">New task</div>
<div class="abs" style="left:960px;top:496px;width:18px;height:25px;background:#8ae68f"></div>
<div class="abs" style="left:889.3px;top:549px;font-size:12.5px;line-height:12.5px;font-weight:400;color:#7a7b80;transform:scaleX(0.9863);transform-origin:0 0;">New task</div>
<div class="abs" style="left:960px;top:542px;width:18px;height:25px;background:#8ae68f"></div>
<div class="abs" style="left:958px;top:181px;width:2px;height:719px;background:#f6ae0c"></div>
<div class="abs" style="left:978px;top:181px;width:2px;height:719px;background:#f6ae0c"></div>
<div class="abs" style="left:1008px;top:181px;width:2px;height:719px;background:#f55050"></div>
<div class="abs" style="left:958px;top:181px;width:20px;height:28px;background:#f8ae0a;overflow:hidden"><div class="abs" style="left:7.7px;top:8px;font-size:11.5px;line-height:11.5px;font-weight:400;color:#fff;">Project start</div></div>
<div class="abs" style="left:978px;top:181px;width:30px;height:28px;background:#f8ae0a;overflow:hidden"><div class="abs" style="left:7.6px;top:8px;font-size:11.5px;line-height:11.5px;font-weight:400;color:#fff;">Project end</div></div>
<div class="abs" style="left:1008px;top:181px;width:43px;height:28px;background:#f85454;border-radius:0 4px 4px 0"></div>
<div class="abs" style="left:1015px;top:189px;font-size:11.5px;line-height:11.5px;font-weight:400;color:#fff;transform:scaleX(0.9485);transform-origin:0 0;">09:28</div>
<div class="abs" style="left:0;top:210px;width:1450px;height:8px;background:linear-gradient(rgba(0,0,0,0.055),rgba(0,0,0,0))"></div>
<div class="abs" style="left:834px;top:153px;width:7px;height:747px;background:#e2e2e5"></div>
<div class="obox" style="left:2px;top:209px;width:290px;height:181px"></div>
<div class="obox" style="left:1px;top:399px;width:290px;height:181px"></div>
</body></html>
